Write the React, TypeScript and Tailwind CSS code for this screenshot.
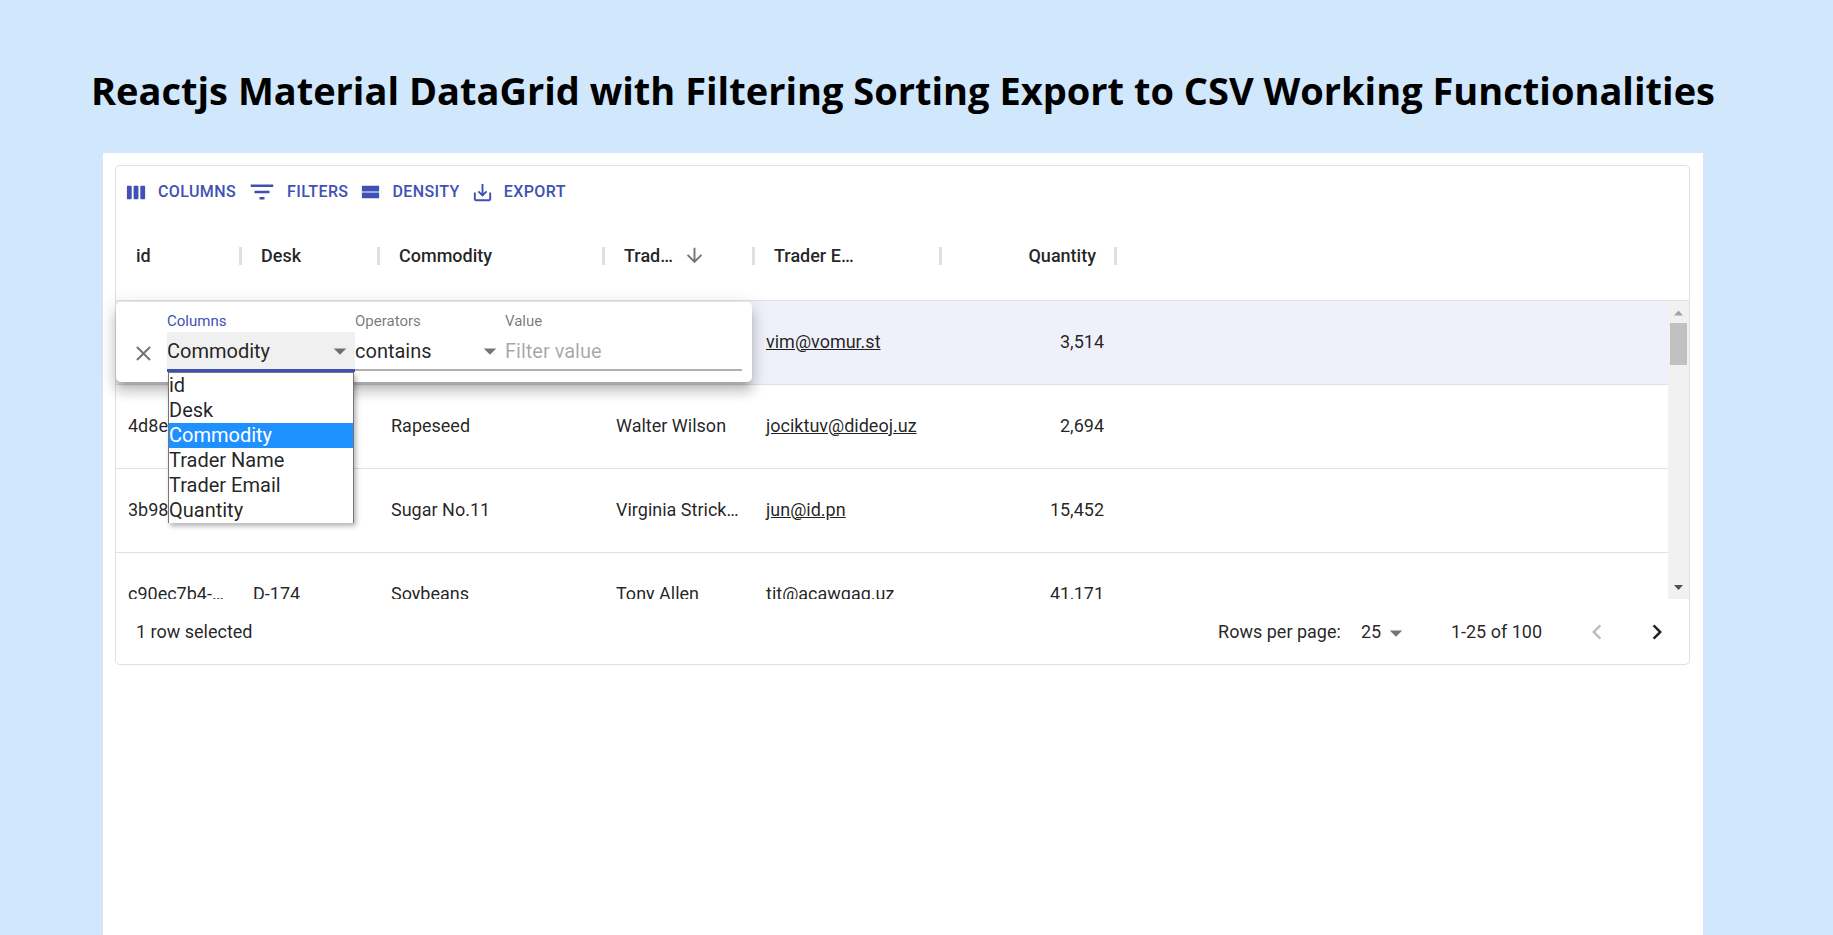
import React, { useState } from 'react';

interface Trade {
  id: string;
  desk: string;
  commodity: string;
  traderName: string;
  traderEmail: string;
  quantity: string;
}

const ROWS: Trade[] = [
  { id: '', desk: '', commodity: '', traderName: '', traderEmail: 'vim@vomur.st', quantity: '3,514' },
  { id: '4d8e', desk: '', commodity: 'Rapeseed', traderName: 'Walter Wilson', traderEmail: 'jociktuv@dideoj.uz', quantity: '2,694' },
  { id: '3b98', desk: '', commodity: 'Sugar No.11', traderName: 'Virginia Strick…', traderEmail: 'jun@id.pn', quantity: '15,452' },
  { id: 'c90ec7b4-…', desk: 'D-174', commodity: 'Soybeans', traderName: 'Tony Allen', traderEmail: 'tit@acawgag.uz', quantity: '41,171' },
];

const FILTER_COLUMNS = ['id', 'Desk', 'Commodity', 'Trader Name', 'Trader Email', 'Quantity'];

// Material icon paths, all on a 24x24 grid
const ICONS = {
  columns:
    'M6 5H3c-.55 0-1 .45-1 1v12c0 .55.45 1 1 1h3c.55 0 1-.45 1-1V6c0-.55-.45-1-1-1zm14 0h-3c-.55 0-1 .45-1 1v12c0 .55.45 1 1 1h3c.55 0 1-.45 1-1V6c0-.55-.45-1-1-1zm-7 0h-3c-.55 0-1 .45-1 1v12c0 .55.45 1 1 1h3c.55 0 1-.45 1-1V6c0-.55-.45-1-1-1z',
  filter: 'M10 18h4v-2h-4v2zM3 6v2h18V6H3zm3 7h12v-2H6v2z',
  density: 'M3 18h18v-6H3v6zM3 5v6h18V5H3z',
  export:
    'M19 12v7H5v-7H3v7c0 1.1.9 2 2 2h14c1.1 0 2-.9 2-2v-7h-2zm-6 .67l2.59-2.58L17 11.5l-5 5-5-5 1.41-1.41L11 12.67V3h2z',
  arrowDown: 'M20 12l-1.41-1.41L13 16.17V4h-2v12.17l-5.58-5.59L4 12l8 8 8-8z',
  close: 'M19 6.41L17.59 5 12 10.59 6.41 5 5 6.41 10.59 12 5 17.59 6.41 19 12 13.41 17.59 19 19 17.59 13.41 12z',
  dropDown: 'M7 10l5 5 5-5z',
  chevronLeft: 'M15.41 7.41L14 6l-6 6 6 6 1.41-1.41L10.83 12z',
  chevronRight: 'M10 6L8.59 7.41 13.17 12l-4.58 4.59L10 18l6-6z',
};

const Icon: React.FC<{ path: string; className: string }> = ({ path, className }) => (
  <svg viewBox="0 0 24 24" fill="currentColor" aria-hidden="true" className={`shrink-0 ${className}`}>
    <path d={path} />
  </svg>
);

const ToolbarButton: React.FC<{ path: string; label: string; iconClass?: string }> = ({
  path,
  label,
  iconClass = 'size-[23px]',
}) => (
  <button type="button" className="flex h-[38px] items-center gap-[10px] text-base font-medium tracking-wide text-[#3f51b5] uppercase">
    <Icon path={path} className={iconClass} />
    {label}
  </button>
);

const HeaderCell: React.FC<{ label: string; align?: 'left' | 'right'; sorted?: boolean }> = ({
  label,
  align = 'left',
  sorted,
}) => (
  <th scope="col" className="relative h-[90px] border-b border-[#e0e0e0] px-5 font-medium">
    <div className={`flex items-center ${align === 'right' ? 'justify-end' : ''}`}>
      <span className="whitespace-nowrap">{label}</span>
      {sorted && (
        <button type="button" aria-label="Sort" className="ml-[10px] text-black/54">
          <Icon path={ICONS.arrowDown} className="size-[23px]" />
        </button>
      )}
    </div>
    <span className="absolute top-9 -right-px h-[18px] w-[3px] bg-[#e0e0e0]" />
  </th>
);

const FilterPanel: React.FC = () => {
  const [column, setColumn] = useState('Commodity');
  const [value, setValue] = useState('');

  return (
    <div className="absolute top-[91px] left-0 flex h-20 w-[636px] rounded-[5px] bg-white pr-[10px] shadow-[0_6px_6px_-4px_rgba(0,0,0,0.2),0_10px_12px_1px_rgba(0,0,0,0.14),0_4px_18px_2px_rgba(0,0,0,0.12)]">
      <button type="button" aria-label="Delete" className="flex w-[51px] items-center justify-center pt-[23px] pl-1 text-black/54">
        <Icon path={ICONS.close} className="size-[25px]" />
      </button>

      <div className="relative flex w-[188px] flex-col pt-2">
        <label htmlFor="filter-column" className="text-[15px] leading-[22px] text-[#3f51b5]">
          Columns
        </label>
        <div className="relative border-b-[3px] border-[#3f51b5]">
          <select
            id="filter-column"
            value={column}
            onChange={(e) => setColumn(e.target.value)}
            className="block h-[37px] w-full appearance-none bg-[#f0f0f0] text-xl outline-none"
          >
            {FILTER_COLUMNS.map((name) => (
              <option key={name}>{name}</option>
            ))}
          </select>
          <Icon path={ICONS.dropDown} className="pointer-events-none absolute top-1 right-0 size-[30px] text-black/54" />
        </div>
        <ul
          role="listbox"
          aria-label="Columns"
          className="absolute top-[70px] left-px w-[186px] border border-b-0 border-[#767676] bg-white text-xl leading-[25px] shadow-[2px_3px_5px_rgba(0,0,0,0.3)]"
        >
          {FILTER_COLUMNS.map((name) => (
            <li
              key={name}
              role="option"
              aria-selected={name === column}
              onClick={() => setColumn(name)}
              className={name === column ? 'bg-[#1e90ff] text-white' : ''}
            >
              {name}
            </li>
          ))}
        </ul>
      </div>

      <div className="flex w-[150px] flex-col pt-2">
        <label htmlFor="filter-operator" className="text-[15px] leading-[22px] text-black/54">
          Operators
        </label>
        <div className="relative border-b-2 border-[#b0b0b0]">
          <select id="filter-operator" className="block h-[37px] w-full appearance-none text-xl outline-none">
            <option>contains</option>
          </select>
          <Icon path={ICONS.dropDown} className="pointer-events-none absolute top-1 right-0 size-[30px] text-black/54" />
        </div>
      </div>

      <div className="flex flex-1 flex-col pt-2">
        <label htmlFor="filter-value" className="text-[15px] leading-[22px] text-black/54">
          Value
        </label>
        <input
          id="filter-value"
          type="text"
          placeholder="Filter value"
          value={value}
          onChange={(e) => setValue(e.target.value)}
          className="h-[39px] w-full border-b-2 border-[#b0b0b0] text-xl outline-none placeholder:text-black/36"
        />
      </div>
    </div>
  );
};

const Scrollbar: React.FC = () => (
  <div className="absolute top-[90px] right-0 bottom-0 flex w-[21px] flex-col items-center bg-[#f1f1f1]">
    <svg viewBox="0 0 21 21" className="h-[22px] w-[21px] shrink-0 fill-[#a3a3a3]" aria-hidden="true">
      <path d="M6 14h9l-4.500-5z" />
    </svg>
    <div className="h-[42px] w-[17px] bg-[#c1c1c1]" />
    <svg viewBox="0 0 21 21" className="mt-auto size-[21px] shrink-0 fill-[#505050]" aria-hidden="true">
      <path d="M6 7h9l-4.500 5z" />
    </svg>
  </div>
);

const CELL = 'h-[84px] truncate border-b border-[#e0e0e0] px-3 pb-0.5';

const App: React.FC = () => (
  <div className="flex min-h-screen flex-col bg-[#d0e7fc] pr-[27px] font-['Roboto',sans-serif] text-black/87">
    <h1 className="pt-[63px] pb-9 text-center font-['Open_Sans',sans-serif] text-[38px] leading-[54px] font-bold whitespace-nowrap text-black">
      Reactjs Material DataGrid with Filtering Sorting Export to CSV Working Functionalities
    </h1>

    <main className="mx-[103px] flex-1 bg-white py-3 pr-[13px] pl-3">
      <div className="rounded-[5px] border border-[#e0e0e0] text-lg">
        <div className="flex gap-[11px] pt-[7px] pl-[9px]">
          <ToolbarButton path={ICONS.columns} label="Columns" />
          <ToolbarButton path={ICONS.filter} label="Filters" iconClass="size-[30px]" />
          <ToolbarButton path={ICONS.density} label="Density" />
          <ToolbarButton path={ICONS.export} label="Export" />
        </div>

        <div className="relative">
          <div className="relative h-[388px] overflow-hidden">
            <table className="w-full table-fixed border-separate border-spacing-0 text-left">
              <colgroup>
                <col className="w-[125px]" />
                <col className="w-[138px]" />
                <col className="w-[225px]" />
                <col className="w-[150px]" />
                <col className="w-[187px]" />
                <col className="w-[175px]" />
                <col />
              </colgroup>
              <thead>
                <tr>
                  <HeaderCell label="id" />
                  <HeaderCell label="Desk" />
                  <HeaderCell label="Commodity" />
                  <HeaderCell label="Trad…" sorted />
                  <HeaderCell label="Trader E…" />
                  <HeaderCell label="Quantity" align="right" />
                  <td className="border-b border-[#e0e0e0]" />
                </tr>
              </thead>
              <tbody>
                {ROWS.map((row, i) => (
                  <tr key={row.traderEmail} className={i === 0 ? 'bg-[#f0f0fa]' : ''}>
                    <td className={CELL}>{row.id}</td>
                    <td className={CELL}>{row.desk}</td>
                    <td className={CELL}>{row.commodity}</td>
                    <td className={CELL}>{row.traderName}</td>
                    <td className={CELL}>
                      <a href={`mailto:${row.traderEmail}`} className="underline">
                        {row.traderEmail}
                      </a>
                    </td>
                    <td className={`${CELL} text-right`}>{row.quantity}</td>
                    <td className={CELL} />
                  </tr>
                ))}
              </tbody>
            </table>
            <Scrollbar />
          </div>
          <FilterPanel />
        </div>

        <div className="flex h-[65px] items-center pr-[2px] pl-5">
          <span>1 row selected</span>
          <label htmlFor="page-size" className="ml-auto">
            Rows per page:
          </label>
          <div className="relative ml-5">
            <select id="page-size" className="block w-[50px] appearance-none outline-none">
              <option>25</option>
            </select>
            <Icon path={ICONS.dropDown} className="pointer-events-none absolute top-0 right-0 size-[30px] text-black/54" />
          </div>
          <span className="ml-10">1-25 of 100</span>
          <div className="ml-[25px] flex">
            <button type="button" aria-label="Previous page" disabled className="p-[15px] text-black/26">
              <Icon path={ICONS.chevronLeft} className="size-[30px]" />
            </button>
            <button type="button" aria-label="Next page" className="p-[15px]">
              <Icon path={ICONS.chevronRight} className="size-[30px]" />
            </button>
          </div>
        </div>
      </div>
    </main>
  </div>
);

export default App;
